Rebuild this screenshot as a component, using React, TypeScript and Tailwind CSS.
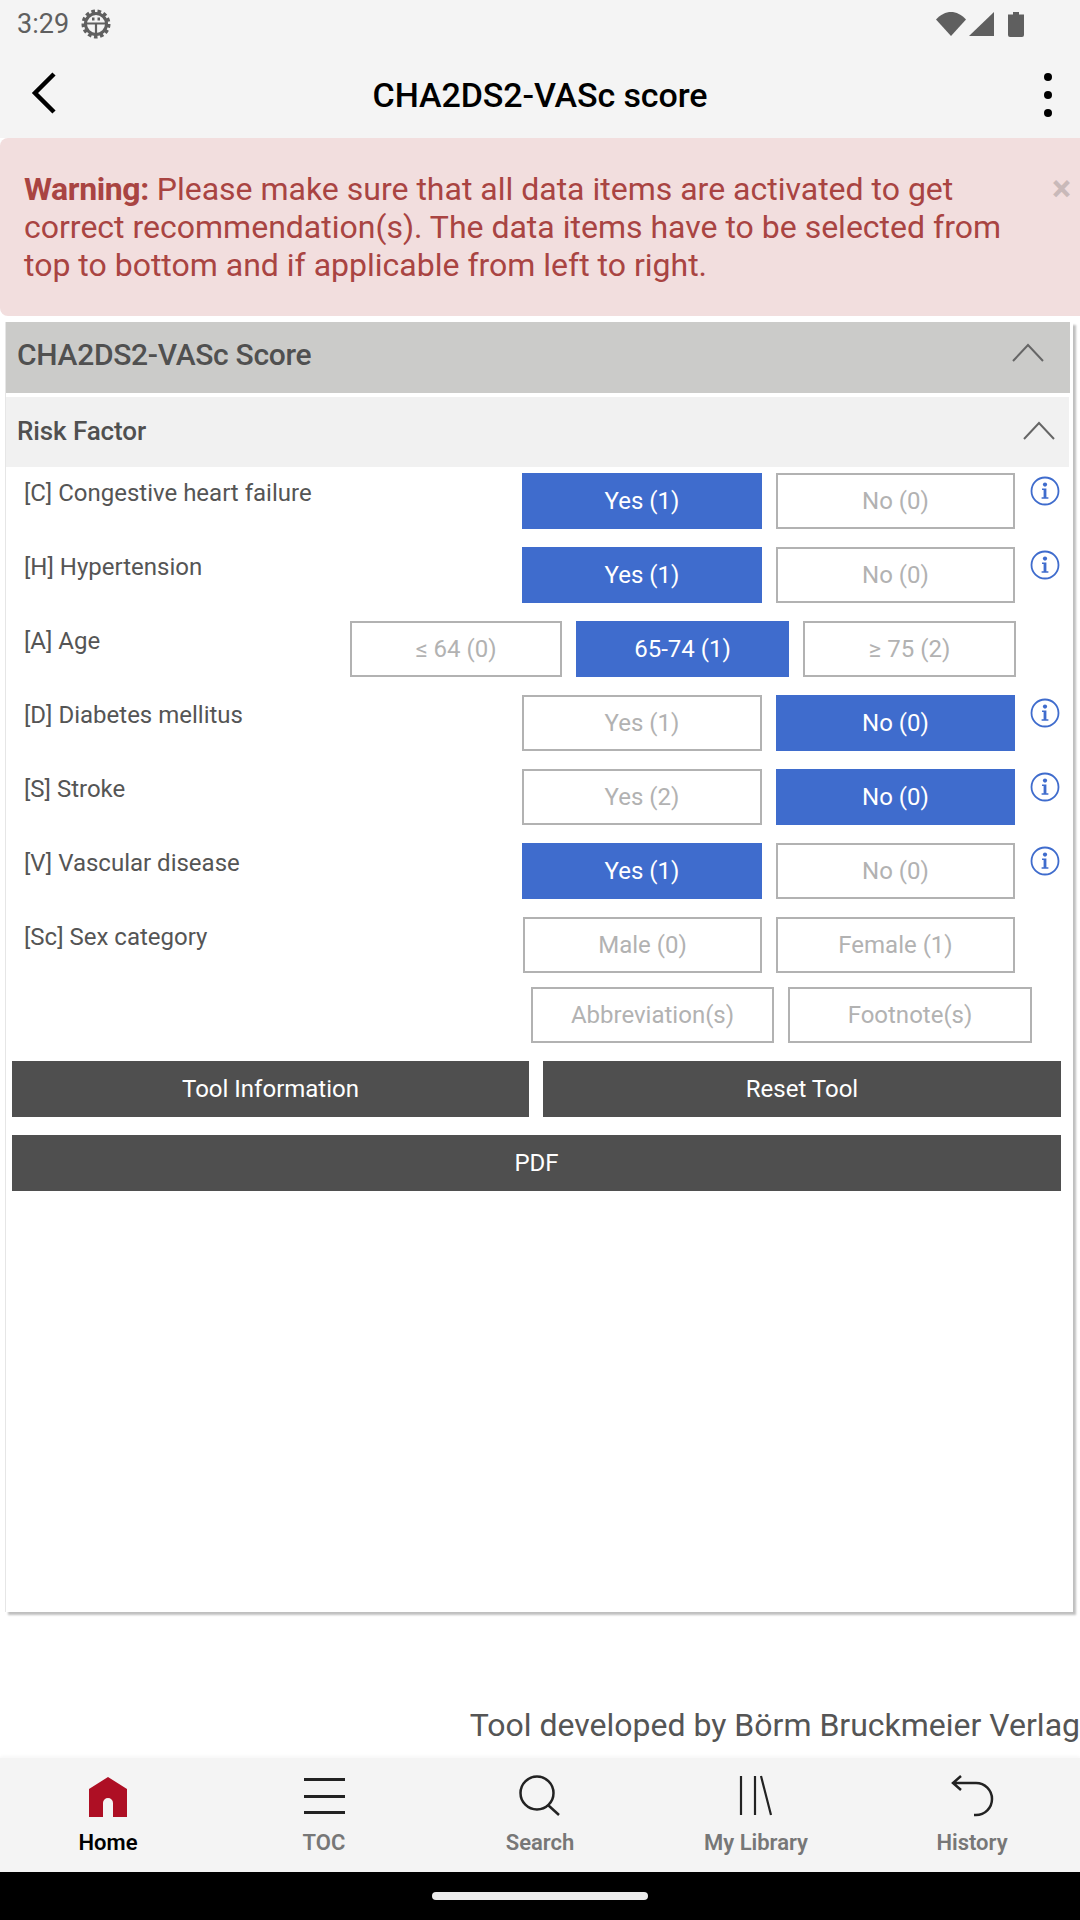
const rows = [
  { label: '[C] Congestive heart failure', opts: ['Yes (1)', 'No (0)'], active: 0, info: true },
  { label: '[H] Hypertension', opts: ['Yes (1)', 'No (0)'], active: 0, info: true },
  { label: '[A] Age', opts: ['≤ 64 (0)', '65-74 (1)', '≥ 75 (2)'], active: 1, info: false },
  { label: '[D] Diabetes mellitus', opts: ['Yes (1)', 'No (0)'], active: 1, info: true },
  { label: '[S] Stroke', opts: ['Yes (2)', 'No (0)'], active: 1, info: true },
  { label: '[V] Vascular disease', opts: ['Yes (1)', 'No (0)'], active: 0, info: true },
  { label: '[Sc] Sex category', opts: ['Male (0)', 'Female (1)'], active: -1, info: false },
];

const InfoIcon = () => (
  <svg width="30" height="30" viewBox="0 0 30 30" className="mt-[3px] ml-[15px] shrink-0">
    <circle cx="15" cy="15" r="13.500" fill="none" stroke="#3f6ccd" strokeWidth="1.800" />
    <circle cx="15" cy="8.600" r="2.100" fill="#3f6ccd" />
    <path d="M12 12.400h4.400v8.800h2v1.600h-6.800v-1.600h2v-7.200H12z" fill="#3f6ccd" />
  </svg>
);

const Chevron = () => (
  <svg width="32" height="19" viewBox="0 0 32 19" fill="none" stroke="#666" strokeWidth="2">
    <path d="M1 18 16 2l15 16" />
  </svg>
);

const OptionButton = ({ text, active, className }: { text: string; active: boolean; className: string }) => (
  <div
    className={`${className} h-[56px] flex items-center justify-center text-[24px] ${
      active ? 'bg-[#3f6ccd] text-white' : 'bg-white border-2 border-[#b2b2b2] text-[#b2b2b2]'
    }`}
  >
    {text}
  </div>
);

const DarkButton = ({ text, className }: { text: string; className: string }) => (
  <div className={`${className} h-[56px] bg-[#4f4f4f] text-white text-[24px] flex items-center justify-center`}>{text}</div>
);

const navItems = [
  {
    label: 'Home',
    icon: <path d="M22 2 41 14v28H27V28a5 5 0 0 0-10 0v14H3V14z" fill="#ae0f24" />,
  },
  {
    label: 'TOC',
    icon: <path d="M2 4.500h41M2 21.500h41M2 37.500h41" stroke="#222" strokeWidth="3" fill="none" />,
  },
  {
    label: 'Search',
    icon: (
      <g stroke="#222" strokeWidth="2.500" fill="none">
        <circle cx="19" cy="18" r="16.500" />
        <path d="M30 30 41 40" />
      </g>
    ),
  },
  {
    label: 'My Library',
    icon: <path d="M7 1v39M21 1v39M27 1l10 39" stroke="#222" strokeWidth="2.200" fill="none" />,
  },
  {
    label: 'History',
    icon: <path d="M11 1 3 8l8 7M3 8h23a16 16 0 0 1 0 32h-2" stroke="#222" strokeWidth="2.500" fill="none" />,
  },
];

export default function App() {
  return (
    <div className="w-[1080px] h-[1920px] bg-white flex flex-col overflow-hidden font-['Roboto',sans-serif]">
      <div className="h-[138px] shrink-0 bg-[#f4f4f4]">
        <div className="h-[48px] flex items-center pl-[17px] pr-[56px]">
          <span className="mt-[1px] text-[27px] leading-none text-[#5f5f5f]">3:29</span>
          <svg width="30" height="30" viewBox="0 0 30 30" className="ml-[12px]">
            <circle cx="15" cy="15" r="12.500" fill="none" stroke="#5f5f5f" strokeWidth="4" strokeDasharray="3.500 2.500" />
            <circle cx="15" cy="15" r="10.500" fill="none" stroke="#5f5f5f" strokeWidth="3" />
            <path d="M5 14.500h20M15 14.500v10" stroke="#5f5f5f" strokeWidth="2.200" />
            <path d="M11 8.500h2.500v3H11zM16.500 8.500H19v3h-2.500z" fill="#5f5f5f" />
          </svg>
          <svg width="88" height="28" viewBox="0 0 88 28" className="ml-auto mt-[1px]" fill="#5f5f5f">
            <path d="M0 8.500C9-1.500 21-1.500 30 8.500L15 25z" />
            <path d="M33 25 58 1v24z" />
            <path d="M72 3.500h5V1h6v2.500h5V24a2 2 0 0 1-2 2H74a2 2 0 0 1-2-2z" />
          </svg>
        </div>
        <div className="h-[90px] flex items-start justify-between relative">
          <svg width="26" height="42" viewBox="0 0 26 42" className="ml-[31px] mt-[24px]" fill="none" stroke="#000" strokeWidth="4.500">
            <path d="M23 2 4 21l19 19" />
          </svg>
          <span className="absolute left-0 right-0 top-[27px] text-center text-[34px] leading-[40px] font-medium text-black tracking-[-0.1px]">CHA2DS2-VASc score</span>
          <div className="mr-[28px] mt-[25px] flex flex-col gap-[10px]">
            <div className="w-[8px] h-[8px] rounded-full bg-black" />
            <div className="w-[8px] h-[8px] rounded-full bg-black" />
            <div className="w-[8px] h-[8px] rounded-full bg-black" />
          </div>
        </div>
      </div>

      <div className="h-[178px] shrink-0 relative bg-[#f2dede] rounded-tl-[8px] rounded-bl-[8px] pl-[24px] pt-[32px] text-[#a94442] text-[32px] leading-[38px]">
        <div className="w-[1020px]">
          <span className="font-bold tracking-[-0.4px]">Warning:</span> Please make sure that all data items are activated to get correct recommendation(s). The data items have to be selected from top to bottom and if applicable from left to right.
        </div>
        <span className="absolute left-[1052px] top-[32px] text-[36px] leading-[38px] font-bold text-[#c9b9b9]">×</span>
      </div>

      <div className="ml-[5px] mt-[6px] w-[1068px] h-[1290px] shrink-0 bg-white border-l border-[#e6e6e6] shadow-[3px_3px_2px_rgba(0,0,0,0.25)]">
        <div className="h-[71px] w-[1064px] bg-[#cbcbc9] flex items-center justify-between pl-[11px] pr-[26px]">
          <span className="text-[30px] -mt-[6px] font-medium text-[#505050] tracking-[-0.3px]">CHA2DS2-VASc Score</span>
          <div className="-mt-[11px]"><Chevron /></div>
        </div>
        <div className="mt-[4px] h-[70px] w-[1063px] bg-[#f1f1f1] flex items-center justify-between pl-[11px] pr-[14px]">
          <span className="text-[26px] -mt-[2px] font-medium text-[#505050] tracking-[-0.1px]">Risk Factor</span>
          <div className="-mt-[3px]"><Chevron /></div>
        </div>

        <div className="mt-[6px] flex flex-col gap-[18px]">
          {rows.map((row) => (
            <div key={row.label} className="h-[56px] flex items-start">
              <div className="flex-1 pl-[18px] pt-[5px] text-[24px] leading-[30px] text-[#555555]">{row.label}</div>
              {row.opts.length === 3 ? (
                <div className="flex gap-[14px] mr-[57px]">
                  {row.opts.map((opt, i) => (
                    <OptionButton key={opt} text={opt} active={i === row.active} className={i === 0 ? 'w-[212px]' : 'w-[213px]'} />
                  ))}
                </div>
              ) : (
                <div className="flex gap-[14px]">
                  {row.opts.map((opt, i) => (
                    <OptionButton key={opt} text={opt} active={i === row.active} className={i === 0 && row.info ? 'w-[240px]' : 'w-[239px]'} />
                  ))}
                </div>
              )}
              {row.opts.length === 3 ? null : row.info ? <InfoIcon /> : <div className="w-[45px] shrink-0" />}
              {row.opts.length === 2 && <div className="w-[13px] shrink-0" />}
            </div>
          ))}
        </div>

        <div className="mt-[14px] flex justify-end gap-[14px] pr-[41px]">
          <OptionButton text="Abbreviation(s)" active={false} className="w-[243px]" />
          <OptionButton text="Footnote(s)" active={false} className="w-[244px]" />
        </div>

        <div className="mt-[18px] pl-[6px] pr-[12px] flex flex-col gap-[18px]">
          <div className="flex gap-[14px]">
            <DarkButton text="Tool Information" className="w-[517px]" />
            <DarkButton text="Reset Tool" className="flex-1" />
          </div>
          <DarkButton text="PDF" className="w-full" />
        </div>
      </div>

      <div className="flex-1 flex items-end justify-end pb-[14px] whitespace-nowrap text-[32px] leading-[38px] text-[#555555]">
        Tool developed by Börm Bruckmeier Verlag
      </div>

      <div className="h-[114px] shrink-0 bg-[#f4f4f4] shadow-[0_-2px_3px_rgba(0,0,0,0.03)] grid grid-cols-5 pt-[17px]">
        {navItems.map((item) => (
          <div key={item.label} className="flex flex-col items-center">
            <svg width="44" height="44" viewBox="0 0 44 44">{item.icon}</svg>
            <span className={`mt-[11px] text-[22px] leading-[26px] font-semibold ${item.label === 'Home' ? 'text-black' : 'text-[#777777]'}`}>
              {item.label}
            </span>
          </div>
        ))}
      </div>

      <div className="h-[48px] shrink-0 bg-black flex justify-center pt-[20px]">
        <div className="w-[216px] h-[8px] rounded-full bg-[#ececec]" />
      </div>
    </div>
  );
}
